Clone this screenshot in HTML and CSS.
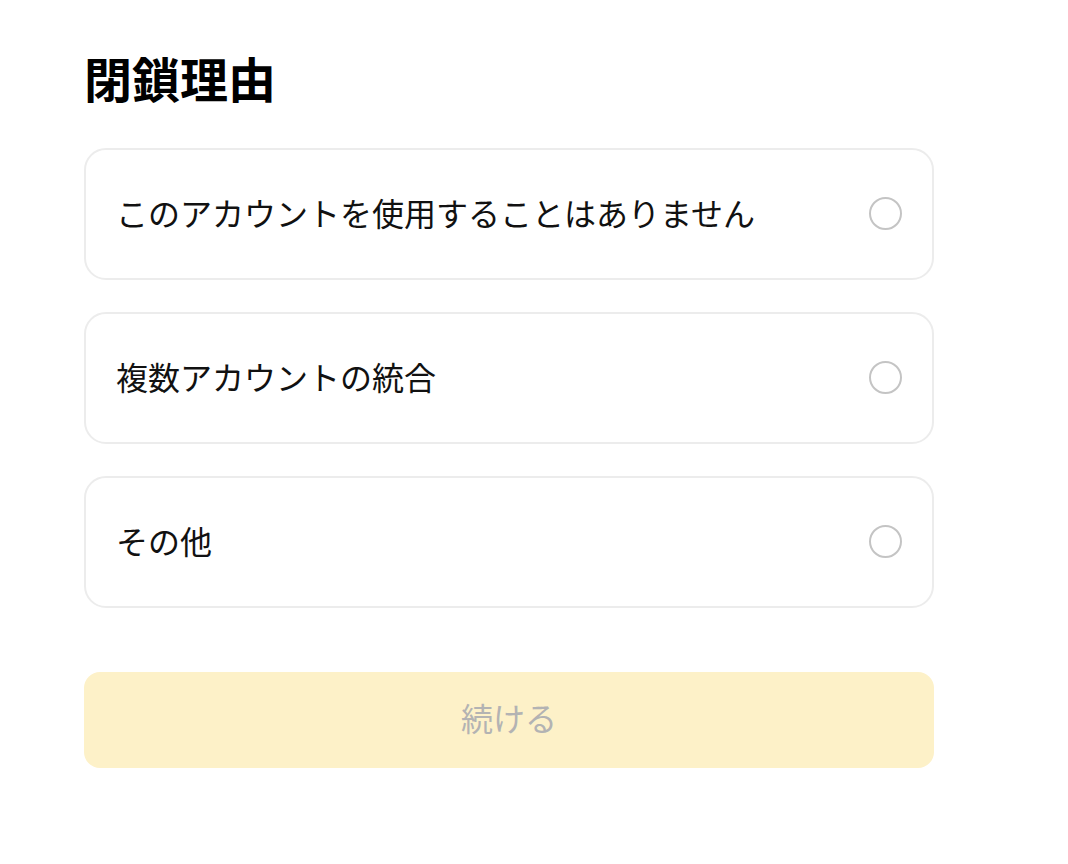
FILE: index.html
```html
<!DOCTYPE html>
<html lang="ja">
<head>
<meta charset="utf-8">
<title>閉鎖理由</title>
<link rel="stylesheet" href="styles.css">
</head>
<body>
<main class="page">
  <h1 class="title">閉鎖理由</h1>
  <div class="options">
    <label class="option">
      <span class="option-text">このアカウントを使用することはありません</span>
      <span class="radio"></span>
    </label>
    <label class="option">
      <span class="option-text">複数アカウントの統合</span>
      <span class="radio"></span>
    </label>
    <label class="option">
      <span class="option-text">その他</span>
      <span class="radio"></span>
    </label>
  </div>
  <button class="continue" disabled>続ける</button>
</main>
</body>
</html>
```

FILE: styles.css
```css
html, body {
  margin: 0;
  padding: 0;
  background: #ffffff;
}

body {
  font-family: "Noto Sans CJK JP", "Noto Sans", sans-serif;
  color: #111111;
}

.page {
  width: 850px;
  padding: 49px 0 0 84px;
  display: flex;
  flex-direction: column;
}

.title {
  margin: 0;
  font-size: 48px;
  line-height: 56px;
  font-weight: 700;
  color: #000000;
  padding-left: 0;
}

.options {
  margin-top: 43px;
  display: flex;
  flex-direction: column;
  gap: 32px;
}

.option {
  box-sizing: border-box;
  height: 132px;
  border: 2px solid #ececec;
  border-radius: 22px;
  display: flex;
  align-items: center;
  justify-content: space-between;
  padding: 0 30px 0 30px;
}

.option-text {
  font-size: 32px;
  line-height: 1;
  color: #111111;
  padding-bottom: 4px;
}

.radio {
  box-sizing: border-box;
  width: 33px;
  height: 33px;
  border: 2px solid #c4c4c4;
  border-radius: 50%;
  margin-top: -2px;
}

.continue {
  margin-top: 64px;
  height: 96px;
  border: none;
  border-radius: 16px;
  background: #fdf1c8;
  color: #b3b3b3;
  font-family: "Noto Sans CJK JP", "Noto Sans", sans-serif;
  font-size: 32px;
  padding: 0 0 6px 0;
}
```
